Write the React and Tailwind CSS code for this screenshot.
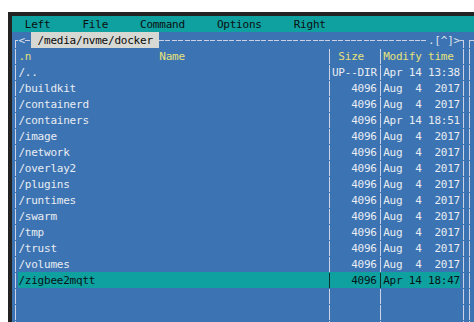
import React from "react";

const rows = [
  { name: "/..", size: "UP--DIR", date: "Apr 14 13:38" },
  { name: "/buildkit", size: "4096", date: "Aug  4  2017" },
  { name: "/containerd", size: "4096", date: "Aug  4  2017" },
  { name: "/containers", size: "4096", date: "Apr 14 18:51" },
  { name: "/image", size: "4096", date: "Aug  4  2017" },
  { name: "/network", size: "4096", date: "Aug  4  2017" },
  { name: "/overlay2", size: "4096", date: "Aug  4  2017" },
  { name: "/plugins", size: "4096", date: "Aug  4  2017" },
  { name: "/runtimes", size: "4096", date: "Aug  4  2017" },
  { name: "/swarm", size: "4096", date: "Aug  4  2017" },
  { name: "/tmp", size: "4096", date: "Aug  4  2017" },
  { name: "/trust", size: "4096", date: "Aug  4  2017" },
  { name: "/volumes", size: "4096", date: "Aug  4  2017" },
  { name: "/zigbee2mqtt", size: "4096", date: "Apr 14 18:47", sel: true },
  { name: "", size: "", date: "" },
  { name: "", size: "", date: "" },
  { name: "", size: "", date: "" },
];

function VLine({ dark }) {
  return (
    <div className="w-[6.4px] h-4 shrink-0 flex flex-col">
      <div className={"ml-[3px] w-px h-[15px] mt-px " + (dark ? "bg-[#10302f]" : "bg-[#cdd3e4]")} />
    </div>
  );
}

function Dashes({ className }) {
  return (
    <div className={"h-4 shrink-0 flex flex-col " + className}>
      <div className="h-[8px]" />
      <div className="h-px bg-[repeating-linear-gradient(90deg,#cdd3e4_0px,#cdd3e4_5px,transparent_5px,transparent_6.4px)]" />
    </div>
  );
}

function CornerLeft() {
  return (
    <div className="w-[6.4px] h-4 shrink-0 flex flex-col">
      <div className="h-[8px]" />
      <div className="ml-[3px] flex-1 border-l border-t border-[#cdd3e4]" />
    </div>
  );
}

function CornerRight() {
  return (
    <div className="w-[6.4px] h-4 shrink-0 flex flex-col">
      <div className="h-[8px]" />
      <div className="mr-[2.4px] flex-1 border-r border-t border-[#cdd3e4]" />
    </div>
  );
}

export default function App() {
  return (
    <div className="w-[474px] h-[322px] overflow-hidden bg-white font-['DejaVu_Sans_Mono','Liberation_Mono',monospace] text-[11px] leading-[18px] tracking-[-0.22px]">
      <div className="ml-2 mt-3 h-[310px] bg-[#232323] pl-1 pt-1">
        <div className="h-[306px] overflow-hidden bg-[#3c73b2]">
          {/* menu bar */}
          <div className="h-4 bg-[#0fa0a0] text-[#0a0f0f] whitespace-pre">
            {"  Left     File     Command     Options     Right"}
          </div>

          {/* top border */}
          <div className="flex h-4 whitespace-pre">
            <CornerLeft />
            <div className="w-[6.4px] shrink-0 text-[#dfe3ec]">{"<"}</div>
            <Dashes className="w-[6.4px]" />
            <div className="w-[128px] h-4 shrink-0 bg-[#d6d8d3] text-[#0a0a0a]">{" /media/nvme/docker "}</div>
            <Dashes className="w-[268.8px]" />
            <div className="w-[32px] shrink-0 text-[#dfe3ec]">{".[^]>"}</div>
            <CornerRight />
            <CornerLeft />
            <Dashes className="flex-1" />
          </div>

          {/* header */}
          <div className="flex h-4 whitespace-pre text-[#e6e27a]">
            <VLine />
            <div className="w-[307.2px] h-4 shrink-0">{".n                    Name"}</div>
            <VLine />
            <div className="w-[44.8px] h-4 shrink-0">{" Size"}</div>
            <VLine />
            <div className="w-[76.8px] h-4 shrink-0">{"Modify time"}</div>
            <VLine />
            <VLine />
          </div>

          {rows.map((r, i) => (
            <div key={i} className="flex h-4 whitespace-pre">
              <VLine />
              <div className={"flex h-4 " + (r.sel ? "bg-[#0fa0a0] text-[#071414]" : "text-[#e9edf3]")}>
                <div className="w-[307.2px] h-4 shrink-0">{r.name}</div>
                <VLine dark={r.sel} />
                <div className="w-[44.8px] h-4 shrink-0 text-right">{r.size}</div>
                <VLine dark={r.sel} />
                <div className="w-[76.8px] h-4 shrink-0">{r.date}</div>
              </div>
              <VLine />
              <VLine />
            </div>
          ))}
        </div>
      </div>
    </div>
  );
}
